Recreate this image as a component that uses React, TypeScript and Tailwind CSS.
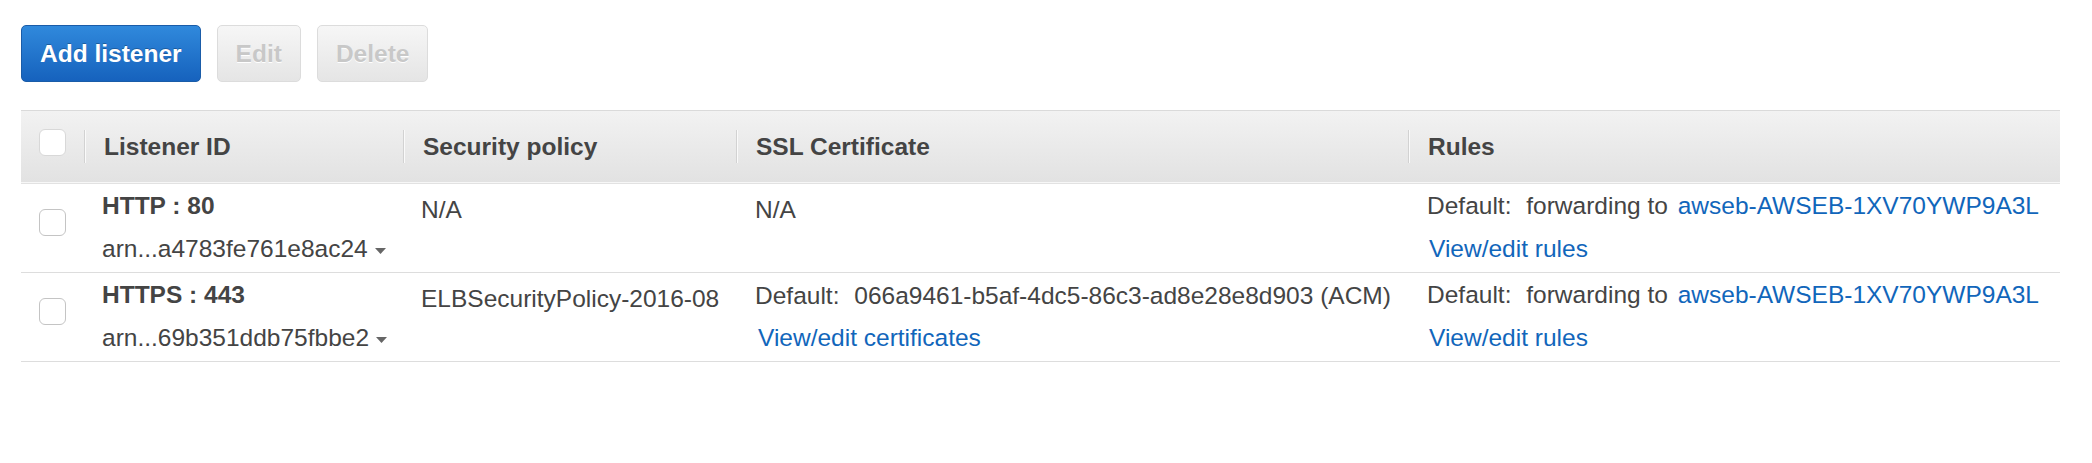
import React from "react";

const font = { fontFamily: '"Liberation Sans", Arial, Helvetica, sans-serif' };

function Caret() {
  return (
    <svg width="11" height="6" viewBox="0 0 11 6" className="inline-block ml-[7px] align-middle">
      <path d="M0 0 L11 0 L5.5 6 Z" fill="#666" />
    </svg>
  );
}

function Checkbox() {
  return <div className="w-[27px] h-[27px] rounded-[6px] bg-white border border-[#c4c4c4]" />;
}

function HeaderCell({ label }: { label: string }) {
  return (
    <div className="flex items-center h-full">
      <div className="w-px h-[33px] bg-[#d2d2d2] shadow-[1px_0_0_#fafafa]" />
      <span className="pl-[19px] font-bold text-[#444]">{label}</span>
    </div>
  );
}

type Row = {
  listener: string;
  arn: string;
  policy: string;
  ssl: { default?: string };
};

const rows: Row[] = [
  { listener: "HTTP : 80", arn: "arn...a4783fe761e8ac24", policy: "N/A", ssl: {} },
  {
    listener: "HTTPS : 443",
    arn: "arn...69b351ddb75fbbe2",
    policy: "ELBSecurityPolicy-2016-08",
    ssl: { default: "066a9461-b5af-4dc5-86c3-ad8e28e8d903 (ACM)" },
  },
];

export default function App() {
  return (
    <div
      className="w-[2092px] h-[463px] bg-white pl-[21px] pr-[32px] pt-[25px] text-[24.5px] leading-[35px] text-[#444]"
      style={font}
    >
      <div className="flex gap-4">
        <button className="h-[57px] px-[18px] rounded-[5px] border border-[#1a5ca8] bg-gradient-to-b from-[#3089dc] to-[#1662bd] text-white font-bold [text-shadow:0_-1px_0_rgba(0,0,0,0.25)]">
          Add listener
        </button>
        <button className="h-[57px] px-[18px] rounded-[5px] border border-[#dcdcdc] bg-gradient-to-b from-[#f6f6f6] to-[#e5e5e5] text-[#c8c8c8] font-bold [text-shadow:0_1px_0_#fff]">
          Edit
        </button>
        <button className="h-[57px] px-[18px] rounded-[5px] border border-[#dcdcdc] bg-gradient-to-b from-[#f6f6f6] to-[#e5e5e5] text-[#c8c8c8] font-bold [text-shadow:0_1px_0_#fff]">
          Delete
        </button>
      </div>

      <div className="mt-[28px]">
        {/* header */}
        <div className="grid grid-cols-[63px_319px_333px_672px_1fr] h-[72px] border-t border-[#dadada] bg-gradient-to-b from-[#f2f2f2] to-[#e2e2e2]">
          <div className="pl-[18px] pt-[18px]">
            <div className="w-[27px] h-[27px] rounded-[6px] bg-white border border-[#d8d8d8]" />
          </div>
          <HeaderCell label="Listener ID" />
          <HeaderCell label="Security policy" />
          <HeaderCell label="SSL Certificate" />
          <HeaderCell label="Rules" />
        </div>
        <div className="h-px bg-[#f7f7f7]" />
        <div className="h-px bg-[#e2e2e2]" />

        {rows.map((r, i) => (
          <div
            key={i}
            className="grid grid-cols-[63px_319px_333px_672px_1fr] h-[89px] border-b border-[#dddddd]"
          >
            <div className="pl-[18px] pt-[25px]">
              <Checkbox />
            </div>
            <div className="pl-[18px] pt-[4px] flex flex-col gap-[8px]">
              <div className="font-bold">{r.listener}</div>
              <div className="whitespace-nowrap">
                {r.arn}
                <Caret />
              </div>
            </div>
            <div className="pl-[18px] pt-[8px] whitespace-nowrap">{r.policy}</div>
            <div className={`pl-[19px] ${r.ssl.default ? "pt-[5px]" : "pt-[8px]"} flex flex-col gap-[7px]`}>
              {r.ssl.default ? (
                <>
                  <div className="whitespace-nowrap">
                    Default:<span className="ml-[8px]"> {r.ssl.default}</span>
                  </div>
                  <a className="ml-[3px] text-[#1166bb] cursor-pointer">View/edit certificates</a>
                </>
              ) : (
                <div>N/A</div>
              )}
            </div>
            <div className="pl-[19px] pt-[4px] flex flex-col gap-[8px]">
              <div className="whitespace-nowrap">
                Default:<span className="ml-[8px]"> forwarding to</span>
                <a className="ml-[3px] text-[#1166bb] cursor-pointer"> awseb-AWSEB-1XV70YWP9A3L</a>
              </div>
              <a className="ml-[2px] text-[#1166bb] cursor-pointer">View/edit rules</a>
            </div>
          </div>
        ))}
      </div>
    </div>
  );
}
